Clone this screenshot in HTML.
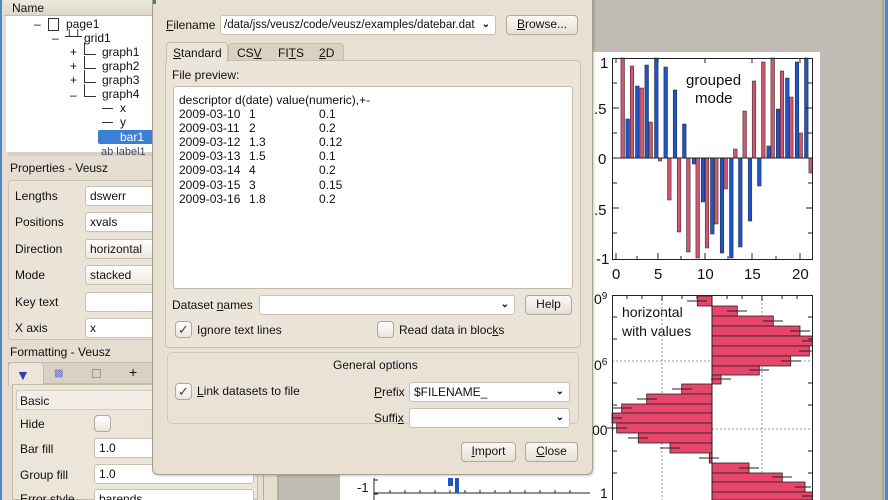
<!DOCTYPE html>
<html style="overflow:hidden;width:888px;height:500px"><head><meta charset="utf-8"><style>
*{box-sizing:border-box;margin:0;padding:0}
body{width:888px;height:500px;overflow:hidden;background:#c0bcb4;font-family:"Liberation Sans",sans-serif;font-size:12px;color:#111;position:relative}
.a{position:absolute;white-space:nowrap}
.fld{position:absolute;background:#fff;border:1px solid #c9c1b2;border-radius:3px;padding:2px 4px;height:20px;line-height:15px;overflow:hidden}
.btn{position:absolute;background:linear-gradient(#faf8f4,#e6e0d5);border:1px solid #b0a898;border-radius:4px;text-align:center;line-height:17px;height:20px}
.cb{position:absolute;width:17px;height:17px;background:linear-gradient(#fff,#ebe6dc);border:1px solid #b0a898;border-radius:4px;font-size:13px;line-height:15px;text-align:center;color:#444}
.arr{position:absolute;right:5px;top:1px;font-size:10px;font-weight:bold;background:#fff}
u{text-decoration:underline}
</style></head><body>
<svg class="a" style="left:0;top:0" width="888" height="500">
<rect x="340" y="52" width="480" height="448" fill="#fff"/>
<rect x="882" y="0" width="2" height="500" fill="#a8a296"/>
<rect x="885" y="0" width="3" height="500" fill="#4f86c6"/>
<g stroke="#222" stroke-width="0.5">
<g fill="#d2566f">
<rect x="620.9" y="58" width="3.6" height="100"/><rect x="630.2" y="66" width="3.6" height="92"/><rect x="639.9" y="88" width="3.6" height="70"/><rect x="648.9" y="122" width="3.6" height="36"/><rect x="658.2" y="158" width="3.6" height="3"/><rect x="667.5" y="158" width="3.6" height="42"/><rect x="677.2" y="158" width="3.6" height="74"/><rect x="686.5" y="158" width="3.6" height="94"/><rect x="695.9" y="158" width="3.6" height="100"/><rect x="705.2" y="158" width="3.6" height="90"/><rect x="714.5" y="158" width="3.6" height="66"/><rect x="723.9" y="158" width="3.6" height="31"/><rect x="733.5" y="149" width="3.6" height="9"/><rect x="742.9" y="111" width="3.6" height="47"/><rect x="752.2" y="81" width="3.6" height="77"/><rect x="761.5" y="62" width="3.6" height="96"/><rect x="770.9" y="58" width="3.6" height="100"/><rect x="780.2" y="71" width="3.6" height="87"/><rect x="789.5" y="97" width="3.6" height="61"/><rect x="798.9" y="133" width="3.6" height="25"/><rect x="808.9" y="158" width="3.6" height="15"/>
</g>
<g fill="#1d55c8">
<rect x="625.9" y="119" width="3.6" height="39"/><rect x="635.5" y="86" width="3.6" height="72"/><rect x="644.9" y="65" width="3.6" height="93"/><rect x="654.5" y="58" width="3.6" height="100"/><rect x="663.9" y="67" width="3.6" height="91"/><rect x="673.2" y="90" width="3.6" height="68"/><rect x="682.5" y="124" width="3.6" height="34"/><rect x="692.2" y="158" width="3.6" height="6"/><rect x="701.2" y="158" width="3.6" height="44"/><rect x="710.5" y="158" width="3.6" height="76"/><rect x="720.2" y="158" width="3.6" height="95"/><rect x="729.5" y="158" width="3.6" height="100"/><rect x="738.5" y="158" width="3.6" height="89"/><rect x="748.2" y="158" width="3.6" height="63"/><rect x="757.5" y="158" width="3.6" height="28"/><rect x="766.9" y="146" width="3.6" height="12"/><rect x="776.2" y="109" width="3.6" height="49"/><rect x="785.5" y="78" width="3.6" height="80"/><rect x="795.2" y="62" width="3.6" height="96"/><rect x="804.5" y="58" width="3.6" height="100"/>
</g></g>
<line x1="612" y1="158" x2="813" y2="158" stroke="#222"/>
<rect x="612.5" y="58.5" width="200" height="201" fill="none" stroke="#222"/>
<g stroke="#222">
<path d="M612 83h5M612 108h7M612 133h5M612 183h5M612 208h7M612 233h5M808 83h5M806 108h7M808 133h5M808 183h5M806 208h7M808 233h5M616 259v-6M658 259v-6M705 259v-6M752 259v-6M800 259v-6M637 259v-3M681 259v-3M728 259v-3M776 259v-3M616 58v5M658 58v5M705 58v5M752 58v5M800 58v5"/>
</g>
<g font-family="Liberation Sans" font-size="15" fill="#111">
<text x="600" y="68">1</text><text x="594" y="114">.5</text><text x="598" y="164">0</text><text x="594" y="215">.5</text><text x="596" y="264">-1</text>
<text x="612" y="279">0</text><text x="654" y="279">5</text><text x="697" y="279">10</text><text x="744" y="279">15</text><text x="792" y="279">20</text>
<text x="686" y="85">grouped</text><text x="695" y="103">mode</text>
<text x="594" y="304" font-size="14">0<tspan dy="-5" font-size="10">9</tspan></text>
<text x="594" y="370" font-size="14">0<tspan dy="-5" font-size="10">6</tspan></text>
<text x="592" y="435" font-size="14">00</text>
<text x="622" y="317" font-size="14">horizontal</text><text x="622" y="336" font-size="14">with values</text>
<text x="600" y="498" font-size="14">1</text>
</g>
<g stroke="#999" stroke-dasharray="2,2"><path d="M662 295V500M762 295V500M612 361H813M612 429H813"/></g>
<g fill="#e8456a" stroke="#222" stroke-width="0.8">
<rect x="697.3" y="296" width="14.7" height="10"/><rect x="712" y="306" width="25.3" height="10"/><rect x="712" y="316" width="61.3" height="10"/><rect x="712" y="326" width="88" height="10"/><rect x="712" y="336" width="100.3" height="10"/><rect x="712" y="346" width="97.3" height="10"/><rect x="712" y="356" width="78.7" height="10"/><rect x="712" y="366" width="47.3" height="9"/><rect x="712" y="375" width="9" height="9"/>
<rect x="681.7" y="384" width="30.3" height="10"/><rect x="646.7" y="394" width="65.3" height="10"/><rect x="621.7" y="404" width="90.3" height="9"/><rect x="612" y="413" width="100" height="10"/><rect x="616.7" y="423" width="95.3" height="10"/><rect x="638.3" y="433" width="73.7" height="10"/><rect x="670" y="443" width="42" height="10"/><rect x="709.3" y="453" width="2.7" height="10"/>
<rect x="712" y="463" width="37" height="10"/><rect x="712" y="473" width="70.3" height="9"/><rect x="712" y="482" width="93" height="10"/><rect x="712" y="492" width="100.3" height="8"/>
</g>
<g stroke="#222" stroke-width="1"><path d="M687 301h20M727 311h20M763 321h20M790 331h20M802 341h10M799 351h14M781 361h20M749 370h20M711 379h20M672 389h20M637 399h20M612 408h20M612 418h10M607 428h20M628 438h20M660 448h20M699 458h20M739 468h20M772 477h20M795 487h16M802 496h10"/></g>
<line x1="712" y1="295" x2="712" y2="500" stroke="#222"/>
<rect x="612.5" y="295.5" width="200" height="210" fill="none" stroke="#222"/>
<g stroke="#222"><path d="M612 317h5M612 339h5M612 383h5M612 405h5M612 451h5M612 473h5M808 317h5M808 339h5M808 383h5M808 405h5M808 451h5M808 473h5M627 295v4M642 295v4M662 295v6M682 295v4M697 295v4M727 295v4M742 295v4M762 295v6M782 295v4M797 295v4"/></g>
<path d="M374 478V500M374 480h4M374 494h4M374 493H590" stroke="#222" fill="none"/>
<g stroke="#222"><path d="M390 493v-3M405 493v-3M420 493v-3M435 493v-3M450 493v-3M465 493v-3M480 493v-3M495 493v-3M510 493v-3M525 493v-3M540 493v-3M555 493v-3M570 493v-3"/></g>
<rect x="448" y="478" width="5" height="8" fill="#1d55c8"/><rect x="455" y="478" width="4" height="15" fill="#1d55c8"/>
<text x="357" y="492" font-family="Liberation Sans" font-size="13" fill="#111">-1</text>
</svg>

<div class="a" style="left:0;top:0;width:279px;height:500px;background:#e4ddd0"></div>
<div class="a" style="left:0;top:0;width:2px;height:500px;background:#4f86c6"></div>
<div class="a" style="left:263px;top:0;width:1px;height:500px;background:#b5ad9e"></div>
<div class="a" style="left:277px;top:0;width:2px;height:500px;background:#b5ad9e"></div>
<div class="a" style="left:4px;top:0;width:256px;height:16px;background:linear-gradient(#eee9e0,#ddd6c8);border-bottom:1px solid #c6bfb1"></div>
<div class="a" style="left:12px;top:1px">Name</div>
<div class="a" style="left:6px;top:16px;width:254px;height:136px;background:#fff"></div>
<div class="a" style="left:8px;top:152px;width:252px;height:4px;background:#d8d0c2"></div>
<div class="a" style="left:34px;top:17px">–</div>
<div class="a" style="left:48px;top:18px;width:11px;height:13px;border:1px solid #333;background:#fff"></div>
<div class="a" style="left:66px;top:17px">page1</div>
<div class="a" style="left:52px;top:31px">–</div><div class="a" style="left:65px;top:29px;font-size:12px">┴┴</div><div class="a" style="left:84px;top:31px">grid1</div>
<div class="a" style="left:70px;top:45px">+</div><div class="a" style="left:84px;top:42px;width:12px;height:13px;border-left:1px solid #333;border-bottom:1px solid #333"></div><div class="a" style="left:102px;top:45px">graph1</div>
<div class="a" style="left:70px;top:59px">+</div><div class="a" style="left:84px;top:56px;width:12px;height:13px;border-left:1px solid #333;border-bottom:1px solid #333"></div><div class="a" style="left:102px;top:59px">graph2</div>
<div class="a" style="left:70px;top:73px">+</div><div class="a" style="left:84px;top:70px;width:12px;height:13px;border-left:1px solid #333;border-bottom:1px solid #333"></div><div class="a" style="left:102px;top:73px">graph3</div>
<div class="a" style="left:70px;top:88px">–</div><div class="a" style="left:84px;top:84px;width:12px;height:13px;border-left:1px solid #333;border-bottom:1px solid #333"></div><div class="a" style="left:102px;top:87px">graph4</div>
<div class="a" style="left:102px;top:108px;width:11px;height:1px;background:#333"></div><div class="a" style="left:120px;top:101px">x</div>
<div class="a" style="left:102px;top:122px;width:11px;height:1px;background:#333"></div><div class="a" style="left:120px;top:115px">y</div>
<div class="a" style="left:98px;top:130px;width:56px;height:14px;background:#3d7fd4;border-radius:2px"></div><div class="a" style="left:120px;top:130px;color:#fff">bar1</div>
<div class="a" style="left:101px;top:146px;color:#446;font-size:11px">ab label1</div>
<div class="a" style="left:10px;top:161px">Properties - Veusz</div>
<div class="a" style="left:8px;top:180px;width:250px;height:160px;border:1px solid #cac2b3;border-radius:4px;background:#e9e3d8"></div>
<div class="a" style="left:15px;top:189px">Lengths</div><div class="fld" style="left:85px;top:186px;width:170px">dswerr</div>
<div class="a" style="left:15px;top:215px">Positions</div><div class="fld" style="left:85px;top:212px;width:170px">xvals</div>
<div class="a" style="left:15px;top:242px">Direction</div><div class="fld" style="left:85px;top:239px;width:170px;background:linear-gradient(#fff,#eee8de)">horizontal</div>
<div class="a" style="left:15px;top:268px">Mode</div><div class="fld" style="left:85px;top:265px;width:170px;background:linear-gradient(#fff,#eee8de)">stacked</div>
<div class="a" style="left:15px;top:295px">Key text</div><div class="fld" style="left:85px;top:292px;width:170px"></div>
<div class="a" style="left:15px;top:321px">X axis</div><div class="fld" style="left:85px;top:318px;width:170px">x</div>
<div class="a" style="left:10px;top:345px">Formatting - Veusz</div>
<div class="a" style="left:8px;top:362px;width:250px;height:22px;background:#d9d1c3;border:1px solid #c3bbac"></div>
<div class="a" style="left:8px;top:362px;width:36px;height:24px;background:#ebe5da;border:1px solid #c3bbac;border-bottom:none;border-radius:4px 4px 0 0"></div>
<div class="a" style="left:16px;top:367px;color:#3b3bb0;font-size:14px">▼</div>
<div class="a" style="left:54px;top:368px;color:#7070d0;font-size:10px">▩</div>
<div class="a" style="left:92px;top:369px;width:9px;height:9px;border:1px solid #999"></div>
<div class="a" style="left:129px;top:364px;font-size:14px">+</div>
<div class="a" style="left:12px;top:384px;width:246px;height:116px;background:#ebe5da;border:1px solid #c3bbac"></div>
<div class="a" style="left:16px;top:390px;width:240px;height:20px;background:#f2eee6;border:1px solid #d2cabb"></div>
<div class="a" style="left:20px;top:394px">Basic</div>
<div class="a" style="left:20px;top:417px">Hide</div><div class="cb" style="left:94px;top:415px"></div>
<div class="a" style="left:20px;top:442px">Bar fill</div><div class="fld" style="left:94px;top:438px;width:160px">1.0</div>
<div class="a" style="left:20px;top:468px">Group fill</div><div class="fld" style="left:94px;top:464px;width:160px">1.0</div>
<div class="a" style="left:20px;top:492px">Error style</div><div class="fld" style="left:94px;top:489px;width:160px">barends</div>

<div class="a" style="left:152px;top:-6px;width:441px;height:481px;background:#e8e1d3;border:1px solid #a69e8e;border-radius:6px;box-shadow:1px 1px 2px rgba(0,0,0,.2)"></div>
<div class="a" style="left:153px;top:0;width:3px;height:4px;background:#3a9a3a"></div>
<div class="a" style="left:166px;top:18px"><u>F</u>ilename</div>
<div class="fld" style="left:220px;top:15px;width:276px;font-size:11.5px;padding-left:3px">/data/jss/veusz/code/veusz/examples/datebar.dat<span class="arr">⌄</span></div>
<div class="btn" style="left:506px;top:15px;width:72px"><u>B</u>rowse...</div>
<div class="a" style="left:165px;top:60px;width:416px;height:288px;background:#ebe5d9;border:1px solid #cac2b2;border-radius:4px"></div>
<div class="a" style="left:228px;top:43px;width:116px;height:18px;background:#d9d1c1;border:1px solid #c6beae;border-radius:4px 4px 0 0"></div>
<div class="a" style="left:166px;top:42px;width:62px;height:20px;background:#ebe5d9;border:1px solid #c6beae;border-bottom:none;border-radius:4px 4px 0 0"></div>
<div class="a" style="left:173px;top:46px"><u>S</u>tandard</div>
<div class="a" style="left:237px;top:46px">CS<u>V</u></div>
<div class="a" style="left:278px;top:46px">FI<u>T</u>S</div>
<div class="a" style="left:319px;top:46px"><u>2</u>D</div>
<div class="a" style="left:172px;top:68px">File preview:</div>
<div class="a" style="left:173px;top:86px;width:400px;height:203px;background:#fff;border:1px solid #c2baab;border-radius:3px"></div>
<div class="a" style="left:179px;top:93px;line-height:14.1px;font-size:12px">descriptor d(date) value(numeric),+-<br>2009-03-10<br>2009-03-11<br>2009-03-12<br>2009-03-13<br>2009-03-14<br>2009-03-15<br>2009-03-16</div>
<div class="a" style="left:249px;top:93px;line-height:14.1px"><br>1<br>2<br>1.3<br>1.5<br>4<br>3<br>1.8</div>
<div class="a" style="left:319px;top:93px;line-height:14.1px"><br>0.1<br>0.2<br>0.12<br>0.1<br>0.2<br>0.15<br>0.2</div>
<div class="a" style="left:172px;top:298px">Dataset <u>n</u>ames</div>
<div class="fld" style="left:259px;top:295px;width:256px"><span class="arr">⌄</span></div>
<div class="btn" style="left:525px;top:295px;width:47px">Help</div>
<div class="cb" style="left:175px;top:321px">✓</div><div class="a" style="left:197px;top:323px">I<u>g</u>nore text lines</div>
<div class="cb" style="left:377px;top:321px"></div><div class="a" style="left:399px;top:323px">Read data in bloc<u>k</u>s</div>
<div class="a" style="left:167px;top:352px;width:412px;height:72px;border:1px solid #d2cab9;border-radius:5px;background:#e9e2d6"></div>
<div class="a" style="left:333px;top:358px">General options</div>
<div class="cb" style="left:175px;top:383px">✓</div><div class="a" style="left:197px;top:384px"><u>L</u>ink datasets to file</div>
<div class="a" style="left:374px;top:385px"><u>P</u>refix</div>
<div class="fld" style="left:409px;top:382px;width:161px">$FILENAME_<span class="arr">⌄</span></div>
<div class="a" style="left:374px;top:411px">Suffi<u>x</u></div>
<div class="fld" style="left:409px;top:408px;width:161px"><span class="arr">⌄</span></div>
<div class="btn" style="left:461px;top:442px;width:55px"><u>I</u>mport</div>
<div class="btn" style="left:525px;top:442px;width:53px"><u>C</u>lose</div>
</body></html>
